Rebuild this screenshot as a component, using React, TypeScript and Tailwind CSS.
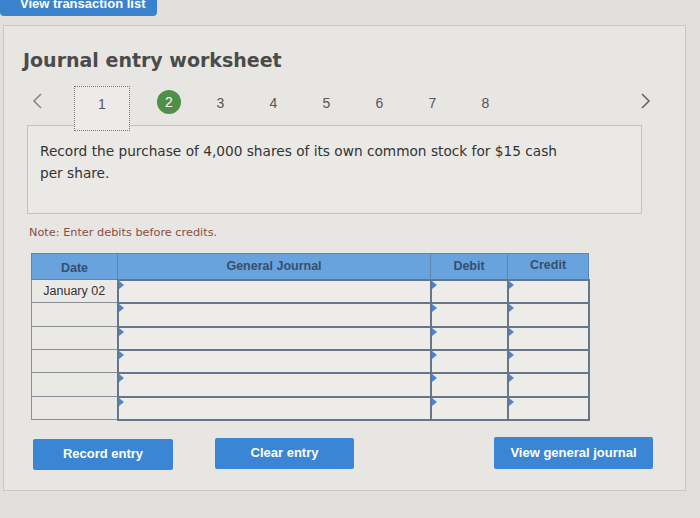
import React from 'react';

const rows = [
  { date: 'January 02', h: 'h-[23px]' },
  { date: '', h: 'h-[24px]' },
  { date: '', h: 'h-[23px]' },
  { date: '', h: 'h-[23px]' },
  { date: '', h: 'h-[24px]' },
  { date: '', h: 'h-[23px]' },
];

const Marker = () => (
  <span className="absolute left-0 top-0 w-0 h-0 border-t-[4px] border-b-[4px] border-l-[5px] border-t-transparent border-b-transparent border-l-[#4a86cf]" />
);

const InputCell = ({ w }: { w: string }) => (
  <td className={`relative ${w} p-0 border-2 border-[#66768a] bg-[#eeece8]`}>
    <Marker />
  </td>
);

export default function App() {
  const pages = ['3', '4', '5', '6', '7', '8'];

  return (
    <div className="w-[700px] h-[518px] overflow-hidden bg-[#e2e0dc] font-['Liberation_Sans',Arial,sans-serif]">
      {/* top button, scrolled partly out of view */}
      <div className="w-[157px] h-[16px] overflow-hidden bg-[#3b82cc] rounded-b-[4px]">
        <div className="-mt-[7px] h-[22px] leading-[22px] pl-[20px] whitespace-nowrap text-white font-bold text-[13px]">
          View transaction list
        </div>
      </div>

      <div className="mt-[9px] ml-[3px] w-[683px] h-[466px] border border-[#c9c7c3] bg-[#e8e6e2]">
        <h1 className="mt-[21px] ml-[19px] text-[19px] leading-[26px] font-bold text-[#4b4b4b] font-['DejaVu_Sans',Verdana,sans-serif]">
          Journal entry worksheet
        </h1>

        {/* pagination */}
        <div className="mt-[13px] h-[39px] flex items-start text-[14px] text-[#555]">
          <div className="ml-[27px] mt-[6px] w-[12px]">
            <svg width="12" height="18" viewBox="0 0 12 18">
              <path d="M10 2 L3 9 L10 16" fill="none" stroke="#888" strokeWidth="1.6" />
            </svg>
          </div>
          <div className="ml-[31px] w-[56px] h-[45px] border border-dotted border-[#777] bg-[#ecebe8] flex justify-center pt-[7px] text-[#555] relative z-10">
            1
          </div>
          <div className="ml-[27px] mt-[4px] w-[24px] h-[24px] rounded-full bg-[#4f8f4a] text-white flex items-center justify-center">
            2
          </div>
          <div className="ml-[13px] flex">
            {pages.map((p) => (
              <div key={p} className="w-[53px] mt-[7px] text-center">
                {p}
              </div>
            ))}
          </div>
          <div className="ml-[128px] mt-[6px]">
            <svg width="12" height="18" viewBox="0 0 12 18">
              <path d="M2 2 L9 9 L2 16" fill="none" stroke="#666" strokeWidth="1.6" />
            </svg>
          </div>
        </div>

        {/* description */}
        <div className="ml-[23px] w-[615px] h-[89px] border border-[#c4c2be] bg-[#ebe9e5] pl-[12px] pt-[14px] text-[13.7px] leading-[22px] text-[#333] font-['DejaVu_Sans',Verdana,sans-serif]">
          Record the purchase of 4,000 shares of its own common stock for $15 cash
          <br />
          per share.
        </div>

        <div className="ml-[25px] mt-[12px] text-[11.3px] leading-[14px] text-[#8a4d45] font-['DejaVu_Sans',Verdana,sans-serif]">
          Note: Enter debits before credits.
        </div>

        {/* journal table */}
        <table className="ml-[27px] mt-[13px] border-collapse table-fixed w-[557px]">
          <thead>
            <tr className="h-[26px] bg-[#69a3dd] text-[12.5px] font-bold text-[#35506f]">
              <th className="w-[86px] border border-[#5a86b5] font-bold pt-[3px]">Date</th>
              <th className="w-[313px] border border-[#5a86b5] font-bold">General Journal</th>
              <th className="w-[77px] border border-[#5a86b5] font-bold">Debit</th>
              <th className="w-[81px] border border-[#5a86b5] font-bold pb-[2px]">Credit</th>
            </tr>
          </thead>
          <tbody>
            {rows.map((r, i) => (
              <tr key={i} className={r.h}>
                <td className="w-[86px] border border-[#8a8f96] bg-[#ebe9e5] text-center text-[12.5px] text-[#333]">
                  {r.date}
                </td>
                <InputCell w="w-[313px]" />
                <InputCell w="w-[77px]" />
                <InputCell w="w-[81px]" />
              </tr>
            ))}
          </tbody>
        </table>

        {/* buttons */}
        <div className="mt-[17px] flex items-start text-white font-bold text-[13px]">
          <button className="ml-[29px] mt-[1px] w-[140px] h-[31px] bg-[#3a86d4] rounded-[2px]">Record entry</button>
          <button className="ml-[42px] w-[139px] h-[31px] bg-[#3a86d4] rounded-[2px]">Clear entry</button>
          <button className="ml-[140px] -mt-[1px] w-[159px] h-[32px] bg-[#3a86d4] rounded-[2px]">View general journal</button>
        </div>
      </div>
    </div>
  );
}
